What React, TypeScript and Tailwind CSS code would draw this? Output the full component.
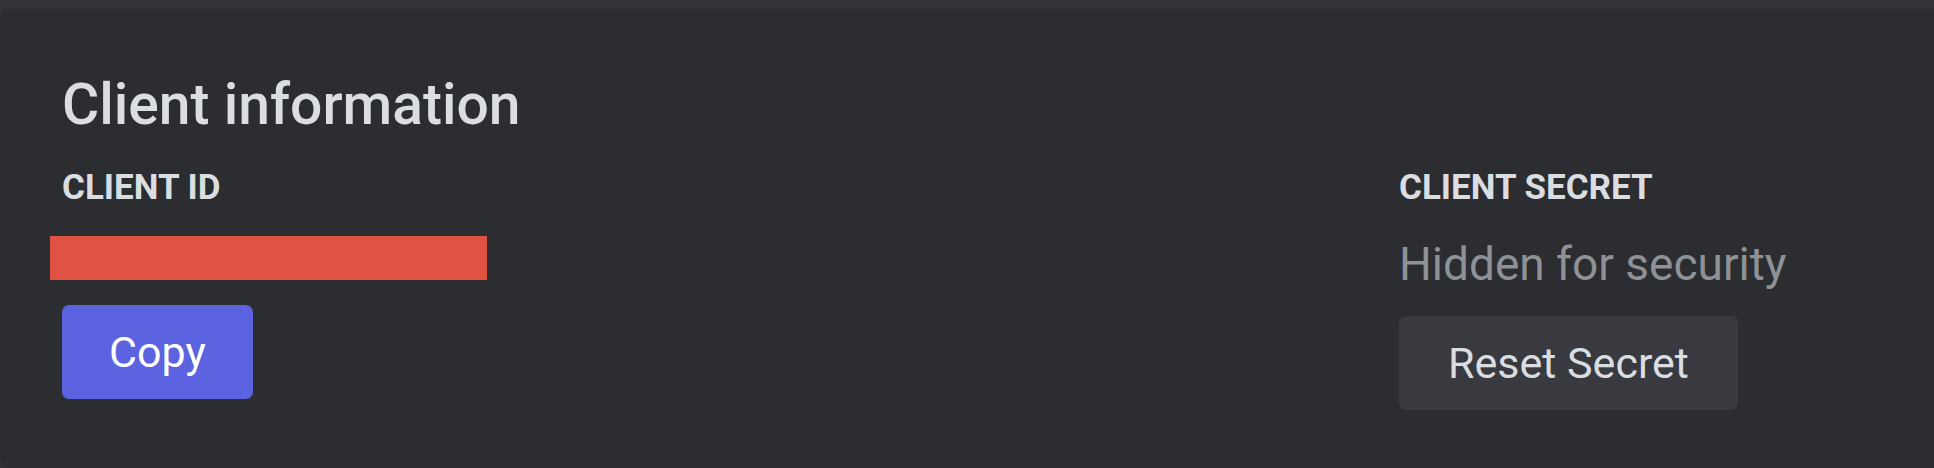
import React from "react";

export default function App() {
  return (
    <div
      className="w-[1934px] h-[468px] bg-[#313338] pt-[9px] overflow-hidden"
      style={{ fontFamily: "Roboto, 'Noto Sans', sans-serif" }}
    >
      <div className="h-[459px] bg-[#2b2d31] rounded-tl-[10px] rounded-bl-[10px] pl-[62px] pt-[67px]">
        <h2 className="text-[57px] leading-none font-medium text-[#dbdee1]">
          Client information
        </h2>
        <div className="flex mt-[37px]">
          <div className="w-[1337px] flex flex-col items-start">
            <div className="text-[35px] leading-none font-bold text-[#dbdee1]">
              CLIENT ID
            </div>
            <div className="mt-[31px] -ml-[12px] w-[437px] h-[44px] bg-[#e05241]" />
            <button className="mt-[25px] w-[191px] h-[94px] rounded-[7px] bg-[#5b63e0] text-white text-[43px] leading-none font-normal flex items-center justify-center">
              Copy
            </button>
          </div>
          <div className="flex flex-col items-start">
            <div className="text-[35px] leading-none font-bold text-[#dbdee1]">
              CLIENT SECRET
            </div>
            <div className="mt-[36px] text-[46px] leading-none text-[#8e9297]">
              Hidden for security
            </div>
            <button className="mt-[29px] w-[339px] h-[94px] rounded-[7px] bg-[#393a40] text-[#dbdee1] text-[43px] leading-none font-normal flex items-center justify-center">
              Reset Secret
            </button>
          </div>
        </div>
      </div>
    </div>
  );
}
